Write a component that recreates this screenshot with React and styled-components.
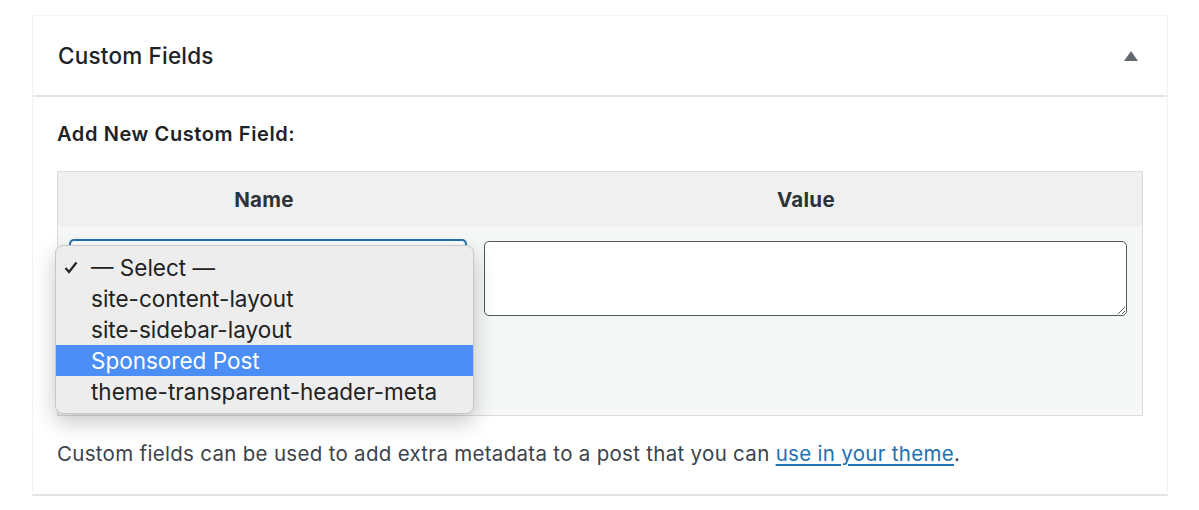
import React from "react";
import styled, { createGlobalStyle } from "styled-components";

const GlobalStyle = createGlobalStyle`
  body {
    margin: 0;
    background: #fff;
    font-family: Inter, "Noto Sans", sans-serif;
    color: #1d2327;
  }
`;

const Panel = styled.section`
  margin: 15px 0 0 32px;
  width: 1136px;
  box-sizing: border-box;
  border: 1px solid #f3f3f4;
  border-bottom: 2px solid #e2e3e5;
  background: #fff;
`;

const PanelHeader = styled.header`
  height: 81px;
  box-sizing: border-box;
  display: flex;
  align-items: center;
  justify-content: space-between;
  padding: 0 29px 0 25px;
  border-bottom: 2px solid #e2e3e5;
`;

const Title = styled.h2`
  margin: 0;
  font-size: 22.5px;
  font-weight: 500;
  letter-spacing: 0.2px;
  color: #1d2327;
`;

const ToggleButton = styled.button`
  border: none;
  background: none;
  padding: 0;
  display: flex;
  cursor: pointer;
`;

const PanelBody = styled.div`
  padding: 24px 24px 26px 24px;
`;

const Label = styled.p`
  margin: 0 0 24px;
  font-size: 20px;
  line-height: 26px;
  font-weight: 600;
  letter-spacing: 0.6px;
  color: #1d2327;
`;

const Table = styled.div`
  border: 1px solid #dcdcde;
  background: #f6f7f7;
`;

const Row = styled.div`
  display: grid;
  grid-template-columns: 38% 62%;
  height: ${({ head }) => (head ? "55px" : "188px")};
  background: ${({ head }) => (head ? "#f0f0f1" : "transparent")};
  align-items: ${({ head }) => (head ? "center" : "start")};
`;

const HeadCell = styled.div`
  text-align: center;
  font-size: 20.5px;
  font-weight: 700;
  letter-spacing: 0.3px;
  color: #2c3338;
`;

const NameCell = styled.div`
  position: relative;
  padding: 13px 0 0 12px;
`;

const ValueCell = styled.div`
  padding: 14px 15px 0 14px;
`;

const SelectBox = styled.div`
  width: 396px;
  height: 40px;
  box-sizing: border-box;
  border: 1px solid #2271b1;
  box-shadow: 0 0 0 1px #2271b1;
  border-radius: 4px;
  background: #fff;
`;

const Menu = styled.ul`
  position: absolute;
  top: 18px;
  left: -3px;
  width: 419px;
  box-sizing: border-box;
  margin: 0;
  padding: 6px 0;
  list-style: none;
  background: #ededee;
  border: 1px solid #c8c8ca;
  border-radius: 8px;
  box-shadow: 0 8px 22px rgba(0, 0, 0, 0.22);
`;

const MenuItem = styled.li`
  position: relative;
  height: 31px;
  line-height: 31px;
  padding-left: 35px;
  font-size: 22.5px;
  color: ${({ active }) => (active ? "#fff" : "#222")};
  background: ${({ active }) => (active ? "#4a8ef6" : "transparent")};
`;

const Check = styled.svg`
  position: absolute;
  left: 8px;
  top: 9px;
`;

const ValueInput = styled.textarea`
  display: block;
  width: 100%;
  height: 75px;
  box-sizing: border-box;
  border: 1px solid #50575e;
  border-radius: 5px;
  background: #fff;
  resize: vertical;
  font-family: inherit;
`;

const Note = styled.p`
  margin: 24px 0 0;
  font-size: 20.5px;
  line-height: 28px;
  letter-spacing: 0.3px;
  color: #3c434a;

  a {
    color: #2271b1;
    text-decoration: underline;
    text-underline-offset: 3px;
  }
`;

const options = [
  "— Select —",
  "site-content-layout",
  "site-sidebar-layout",
  "Sponsored Post",
  "theme-transparent-header-meta",
];

const App = () => {
  return (
    <>
      <GlobalStyle />
      <Panel>
        <PanelHeader>
          <Title>Custom Fields</Title>
          <ToggleButton aria-label="Toggle panel">
            <svg width="14" height="10" viewBox="0 0 14 10">
              <path d="M7 0 L14 10 L0 10 Z" fill="#646970" />
            </svg>
          </ToggleButton>
        </PanelHeader>

        <PanelBody>
          <Label>Add New Custom Field:</Label>

          <Table>
            <Row head>
              <HeadCell>Name</HeadCell>
              <HeadCell>Value</HeadCell>
            </Row>
            <Row>
              <NameCell>
                <SelectBox />
                <Menu>
                  {options.map((opt, i) => (
                    <MenuItem key={opt} active={i === 3}>
                      {i === 0 && (
                        <Check width="14" height="13" viewBox="0 0 14 13">
                          <path d="M1.5 7 L5 11 L12.5 1.5" fill="none" stroke="#222" strokeWidth="2.2" />
                        </Check>
                      )}
                      {opt}
                    </MenuItem>
                  ))}
                </Menu>
              </NameCell>
              <ValueCell>
                <ValueInput />
              </ValueCell>
            </Row>
          </Table>

          <Note>
            Custom fields can be used to add extra metadata to a post that you can{" "}
            <a href="#">use in your theme</a>.
          </Note>
        </PanelBody>
      </Panel>
    </>
  );
};

export default App;
